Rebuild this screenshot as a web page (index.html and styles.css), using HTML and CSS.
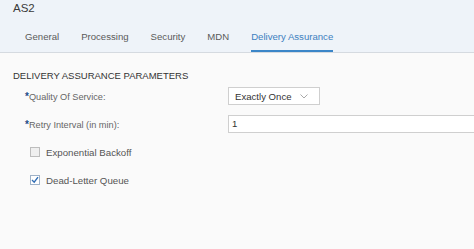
FILE: index.html
```html
<!DOCTYPE html>
<html lang="en">
  <head>
    <meta charset="UTF-8" />
    <title>AS2 - Delivery Assurance</title>
    <link rel="stylesheet" href="styles.css">
  </head>
  <body>
    <header class="header">
      <div class="title">AS2</div>
      <nav class="tabs">
        <span class="tab">General</span>
        <span class="tab">Processing</span>
        <span class="tab">Security</span>
        <span class="tab">MDN</span>
        <span class="tab active">Delivery Assurance</span>
      </nav>
    </header>

    <main class="content">
      <h2 class="section-title">DELIVERY ASSURANCE PARAMETERS</h2>

      <div class="form">
        <div class="row">
          <label class="label"><span class="req">*</span>Quality Of Service:</label>
          <div class="select">
            <span>Exactly Once</span>
            <svg class="chevron" width="8" height="5" viewBox="0 0 8 5">
              <polyline points="0.5,0.5 4,4 7.5,0.5" fill="none" stroke="#a9a9a9" stroke-width="1" />
            </svg>
          </div>
        </div>

        <div class="row">
          <label class="label"><span class="req">*</span>Retry Interval (in min):</label>
          <div class="input">1</div>
        </div>

        <div class="row check-row">
          <span class="checkbox"></span>
          <span class="check-label">Exponential Backoff</span>
        </div>

        <div class="row check-row">
          <span class="checkbox checked">
            <svg width="8" height="8" viewBox="0 0 8 8">
              <polyline points="1,4 3.2,6.2 7,1.2" fill="none" stroke="#2f6db5" stroke-width="1.4" />
            </svg>
          </span>
          <span class="check-label">Dead-Letter Queue</span>
        </div>
      </div>
    </main>
  </body>
</html>
```

FILE: styles.css
```css
/* Base */
* {
  margin: 0;
  padding: 0;
  box-sizing: border-box;
}

body {
  width: 474px;
  height: 249px;
  overflow: hidden;
  background: #fafafa;
  color: #333;
  font-family: 'Liberation Sans', Arial, sans-serif;
}

/* Header with tabs */
.header {
  background: #eef3f9;
  border-bottom: 1px solid #d5dae0;
  padding: 1px 13px 0;
}

.title {
  font-size: 11.5px;
  line-height: 14px;
  color: #3a3a3a;
}

.tabs {
  display: flex;
  gap: 22px;
  padding-left: 12px;
}

.tab {
  font-size: 9.6px;
  line-height: 14px;
  color: #5a5a5a;
  padding: 15px 0 6px;
  border-bottom: 2px solid transparent;
}

.tab.active {
  color: #3d80c0;
  border-bottom-color: #3b86c8;
}

/* Form content */
.content {
  padding: 17px 0 0 13px;
}

.section-title {
  font-size: 9.5px;
  font-weight: normal;
  line-height: 12px;
  color: #333;
  margin-bottom: 5px;
}

.form {
  display: flex;
  flex-direction: column;
  gap: 10px;
}

.row {
  display: flex;
  align-items: center;
  height: 18px;
}

.label {
  width: 215px;
  padding-left: 12px;
  font-size: 9.2px;
  color: #666;
}

.req {
  color: #1d4a88;
  font-weight: bold;
  font-size: 10px;
}

.select {
  width: 92px;
  height: 18px;
  border: 1px solid #cfcfcf;
  background: #fff;
  display: flex;
  align-items: center;
  justify-content: space-between;
  padding: 0 11px 0 6px;
  font-size: 9.6px;
  color: #333;
}

.input {
  flex: 1;
  height: 18px;
  border: 1px solid #cfcfcf;
  border-right: none;
  background: #fff;
  padding-left: 3px;
  font-size: 9.6px;
  line-height: 16px;
  color: #333;
}

.check-row {
  padding-left: 17px;
}

.checkbox {
  width: 10px;
  height: 10px;
  border: 1px solid #bdbdbd;
  background: #efefef;
  display: flex;
  align-items: center;
  justify-content: center;
  margin-right: 6px;
}

.checkbox.checked {
  background: #fff;
  border-color: #9fb2c8;
}

.check-label {
  font-size: 9.7px;
  color: #555;
}
```
